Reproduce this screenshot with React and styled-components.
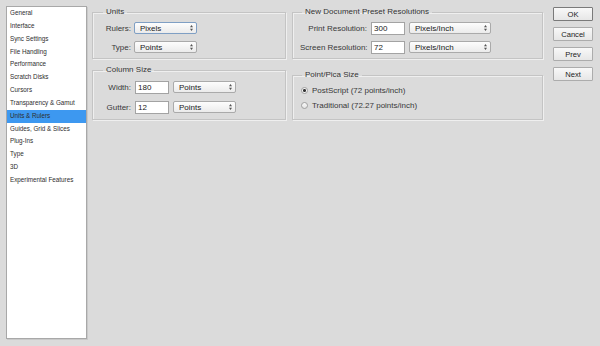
import styled, { createGlobalStyle } from "styled-components";

const GlobalStyle = createGlobalStyle`
  html, body {
    margin: 0;
    padding: 0;
    background: #dbdbdb;
  }
  body {
    font-family: "Liberation Sans", Arial, sans-serif;
  }
`;

const Page = styled.div`
  width: 600px;
  height: 346px;
  box-sizing: border-box;
  display: flex;
  align-items: flex-start;
  padding: 6px 7px 0 6px;
  background: #dbdbdb;
`;

const Sidebar = styled.ul`
  list-style: none;
  margin: 0;
  padding: 0;
  width: 81px;
  height: 333px;
  box-sizing: border-box;
  background: #fff;
  border: 1px solid #a8a8a8;
  box-shadow: 1px 1px 0 #c9c9c9;
`;

const NavItem = styled.li`
  height: 12.85px;
  line-height: 12.85px;
  padding-left: 3px;
  font-size: 6.3px;
  color: #2e2e2e;
  white-space: nowrap;
  background: ${(p) => (p.$active ? "#3d98f0" : "transparent")};
`;

const Panels = styled.div`
  display: grid;
  grid-template-columns: 194px 251px;
  column-gap: 6px;
  margin: 1px 0 0 5px;
`;

const Column = styled.div`
  display: flex;
  flex-direction: column;
  gap: ${(p) => p.$gap}px;
`;

const Group = styled.fieldset`
  margin: 0;
  min-width: 0;
  box-sizing: border-box;
  height: ${(p) => p.$h}px;
  padding: ${(p) => p.$top}px 6px 0 ${(p) => p.$left}px;
  border: 1px solid #c4c4c4;
  box-shadow: 1px 1px 0 #efefef, inset 1px 1px 0 #efefef;
  display: flex;
  flex-direction: column;
  gap: ${(p) => p.$gap}px;
`;

const Legend = styled.legend`
  padding: 0 3px;
  margin-left: ${(p) => p.$indent || 0}px;
  font-size: 8px;
  line-height: 10px;
  color: #333;
`;

const Row = styled.div`
  display: flex;
  align-items: center;
  height: 12px;
`;

const Label = styled.span`
  width: ${(p) => p.$w}px;
  margin-right: ${(p) => p.$gap || 3}px;
  text-align: right;
  font-size: 8px;
  color: #383838;
  white-space: nowrap;
`;

const SelectBox = styled.div`
  display: flex;
  align-items: center;
  justify-content: space-between;
  width: ${(p) => p.$w}px;
  height: 12px;
  box-sizing: border-box;
  margin-left: ${(p) => p.$ml || 0}px;
  padding: 0 3px 0 5px;
  border: 1px solid ${(p) => (p.$focused ? "#7f9fc4" : "#aaaaaa")};
  border-radius: 2px;
  background: linear-gradient(#fdfdfd, #ebebeb);
  font-size: 8px;
  color: #222;
`;

const TextInput = styled.div`
  width: ${(p) => p.$w}px;
  height: 13px;
  box-sizing: border-box;
  padding-left: 2px;
  border: 1px solid #a3a3a3;
  background: #fff;
  font-size: 8px;
  line-height: 11px;
  color: #222;
`;

const RadioRow = styled.div`
  display: flex;
  align-items: center;
  height: 12px;
  padding-left: 1px;
  font-size: 8px;
  color: #383838;
`;

const RadioDot = styled.span`
  width: 7px;
  height: 7px;
  box-sizing: border-box;
  margin-right: 4px;
  border-radius: 50%;
  border: 1px solid #a0a0a0;
  background: ${(p) =>
    p.$checked
      ? "radial-gradient(circle, #333 0 1.3px, #f4f4f4 1.6px)"
      : "linear-gradient(#f9f9f9, #e4e4e4)"};
`;

const ButtonStack = styled.div`
  display: flex;
  flex-direction: column;
  gap: 6px;
  margin: 1px 0 0 10px;
`;

const Button = styled.button`
  width: 40px;
  height: 14px;
  padding: 0;
  box-sizing: border-box;
  border: 1px solid ${(p) => (p.$primary ? "#7a7a7a" : "#acacac")};
  border-radius: 1px;
  background: linear-gradient(#f8f8f8, #e6e6e6);
  font-family: inherit;
  font-size: 7.6px;
  color: #222;
`;

const Arrows = () => (
  <svg width="3" height="6" viewBox="0 0 3 6">
    <path d="M1.5 0 L3 2.2 L0 2.2 Z M1.5 6 L3 3.8 L0 3.8 Z" fill="#555" />
  </svg>
);

const Select = ({ value, w, ml, focused }) => (
  <SelectBox $w={w} $ml={ml} $focused={focused}>
    <span>{value}</span>
    <Arrows />
  </SelectBox>
);

const navItems = [
  "General",
  "Interface",
  "Sync Settings",
  "File Handling",
  "Performance",
  "Scratch Disks",
  "Cursors",
  "Transparency & Gamut",
  "Units & Rulers",
  "Guides, Grid & Slices",
  "Plug-Ins",
  "Type",
  "3D",
  "Experimental Features",
];

export default function App() {
  return (
    <>
      <GlobalStyle />
      <Page>
        <Sidebar>
          {navItems.map((item) => (
            <NavItem key={item} $active={item === "Units & Rulers"}>
              {item}
            </NavItem>
          ))}
        </Sidebar>

        <Panels>
          <Column $gap={6}>
            <Group $h={52} $top={5} $left={10} $gap={7}>
              <Legend>Units</Legend>
              <Row>
                <Label $w={28}>Rulers:</Label>
                <Select value="Pixels" w={63} focused />
              </Row>
              <Row>
                <Label $w={28}>Type:</Label>
                <Select value="Points" w={63} />
              </Row>
            </Group>
            <Group $h={55} $top={6} $left={10} $gap={8}>
              <Legend>Column Size</Legend>
              <Row>
                <Label $w={28} $gap={4}>Width:</Label>
                <TextInput $w={34}>180</TextInput>
                <Select value="Points" w={63} ml={4} />
              </Row>
              <Row>
                <Label $w={28} $gap={4}>Gutter:</Label>
                <TextInput $w={34}>12</TextInput>
                <Select value="Points" w={63} ml={4} />
              </Row>
            </Group>
          </Column>

          <Column $gap={11}>
            <Group $h={52} $top={5} $left={7} $gap={7}>
              <Legend $indent={2}>New Document Preset Resolutions</Legend>
              <Row>
                <Label $w={67} $gap={4}>Print Resolution:</Label>
                <TextInput $w={34}>300</TextInput>
                <Select value="Pixels/Inch" w={82} ml={4} />
              </Row>
              <Row>
                <Label $w={67} $gap={4}>Screen Resolution:</Label>
                <TextInput $w={34}>72</TextInput>
                <Select value="Pixels/Inch" w={82} ml={4} />
              </Row>
            </Group>
            <Group $h={50} $top={4} $left={7} $gap={3}>
              <Legend $indent={2}>Point/Pica Size</Legend>
              <RadioRow>
                <RadioDot $checked />
                PostScript (72 points/inch)
              </RadioRow>
              <RadioRow>
                <RadioDot />
                Traditional (72.27 points/inch)
              </RadioRow>
            </Group>
          </Column>
        </Panels>

        <ButtonStack>
          <Button $primary>OK</Button>
          <Button>Cancel</Button>
          <Button>Prev</Button>
          <Button>Next</Button>
        </ButtonStack>
      </Page>
    </>
  );
}
